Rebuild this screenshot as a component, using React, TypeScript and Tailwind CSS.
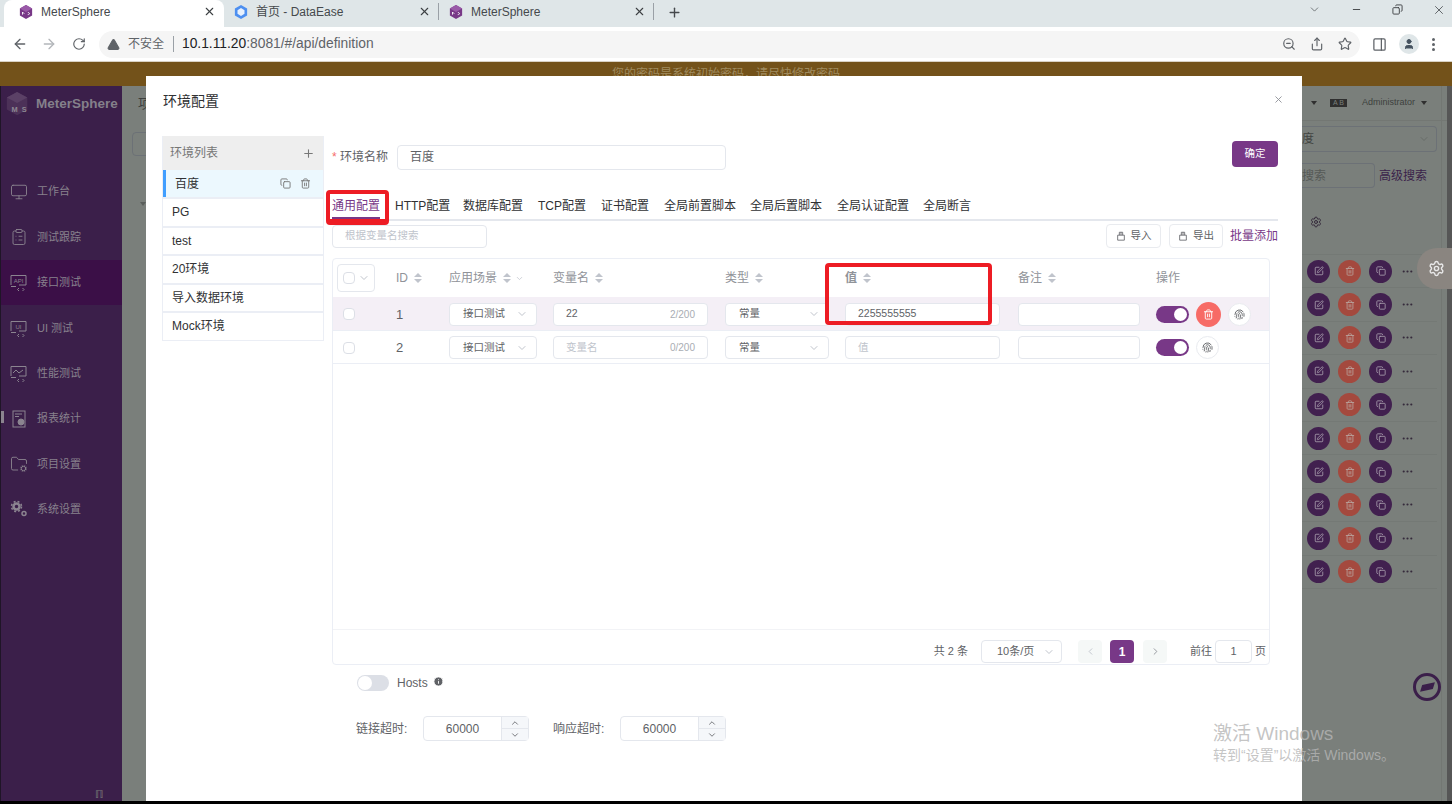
import {
  ArrowLeft,
  ArrowRight,
  ChevronDown,
  ChevronLeft,
  ChevronRight,
  ChevronUp,
  ClipboardList,
  Copy,
  Ellipsis,
  Fingerprint,
  FolderCog,
  Info,
  Minus,
  Monitor,
  PanelRight,
  Plus,
  RotateCw,
  Settings,
  Share,
  SquarePen,
  Star,
  Trash2,
  TriangleAlert,
  User,
  X,
  ZoomOut,
} from 'lucide-react';

const tabs = [
  { label: '通用配置', w: 'w-[63px]' },
  { label: 'HTTP配置', w: 'w-[68px]' },
  { label: '数据库配置', w: 'w-[75px]' },
  { label: 'TCP配置', w: 'w-[63px]' },
  { label: '证书配置', w: 'w-[63px]' },
  { label: '全局前置脚本', w: 'w-[86px]' },
  { label: '全局后置脚本', w: 'w-[87px]' },
  { label: '全局认证配置', w: 'w-[86px]' },
  { label: '全局断言', w: 'w-[60px]' },
];
const envs = ['PG', 'test', '20环境', '导入数据环境', 'Mock环境'];

function Favicon() {
  return (
    <svg viewBox="0 0 16 16" className="w-[14px] h-[14px] shrink-0">
      <polygon points="8,0 15,4 15,12 8,16 1,12 1,4" fill="#783887" />
      <polygon points="8,0 15,4 8,8 1,4" fill="#9a5aa8" />
      <path d="M4 11V8l2 2M10 11c1 0 2-.3 2-1.2S10 8.600 10 8" stroke="#fff" strokeWidth="1" fill="none" />
    </svg>
  );
}

function ChromeTab({ title, active, sep, icon }: { title: string; active?: boolean; sep?: boolean; icon: React.ReactNode }) {
  return (
    <div className={`h-[27px] flex items-center pb-[4px] pr-[8px] ${active ? 'w-[220px] pl-[15px] bg-white rounded-t-lg' : 'w-[215px] pl-[10px]'} ${sep ? 'relative' : ''}`}>
      {icon}
      <span className="ml-[8px] text-[12px] text-[#45494c] flex-1">{title}</span>
      <X size={13} className="text-[#3c4043]" />
      {sep && <span className="absolute right-0 top-[3px] h-[17px] w-px bg-[#9aa0a6]" />}
    </div>
  );
}

function SideIcon({ label, kind }: { label?: string; kind?: 'chart' }) {
  return (
    <svg viewBox="0 0 18 18" className="w-[18px] h-[18px] text-[#8b8490]" fill="none" stroke="currentColor" strokeWidth="1">
      <path d="M1 12V2.500h15V12H9M1 13.500h5" />
      {label && (
        <text x="8.500" y="10" textAnchor="middle" fontSize="6" fill="currentColor" stroke="none">
          {label}
        </text>
      )}
      {kind === 'chart' && <path d="M3 9l3-3 3 3 4-3" />}
      <path d="M9 15l-1.500 1.500L9 18M12.500 15l1.500 1.500-1.500 1.500" />
    </svg>
  );
}

function SideItem({ icon, label, active }: { icon: React.ReactNode; label: string; active?: boolean }) {
  return (
    <div className={`h-[45.400px] flex items-center pl-[9px] ${active ? 'bg-[#3b0f47]' : ''}`}>
      <span className="w-[27px] flex items-center">{icon}</span>
      <span className="text-[11px] text-[#88818d]">{label}</span>
    </div>
  );
}

function Sidebar() {
  return (
    <aside className="w-[122px] shrink-0 bg-[#3b1f4a] border-l border-[#1f1527] flex flex-col relative">
      <div className="h-[36px] flex items-center pl-[4px]">
        <svg viewBox="0 0 28 28" className="w-[26px] h-[26px] shrink-0">
          <polygon points="13,1 24,7 24,20 13,26 2,20 2,7" fill="#4c3158" />
          <polygon points="13,1 24,7 13,13 2,7" fill="#5b4166" />
          <text x="7" y="23" fontSize="8" fontWeight="700" fill="#8d8792">M</text>
          <text x="18" y="23" fontSize="8" fontWeight="700" fill="#8d8792">S</text>
        </svg>
        <span className="ml-[5px] text-[13.500px] font-bold text-[#84808a] whitespace-nowrap">MeterSphere</span>
      </div>
      <div className="h-[47px]" />
      <div className="flex flex-col">
        <SideItem label="工作台" icon={<Monitor size={18} strokeWidth={1.2} className="text-[#8b8490]" />} />
        <SideItem label="测试跟踪" icon={<ClipboardList size={18} strokeWidth={1.2} className="text-[#8b8490]" />} />
        <SideItem active label="接口测试" icon={<SideIcon label="API" />} />
        <SideItem label="UI 测试" icon={<SideIcon label="UI" />} />
        <SideItem label="性能测试" icon={<SideIcon kind="chart" />} />
        <SideItem
          label="报表统计"
          icon={
            <svg viewBox="0 0 18 18" className="w-[18px] h-[18px] text-[#8b8490]" fill="none" stroke="currentColor">
              <rect x="3" y="1" width="12" height="16" />
              <path d="M5 4h7M5 6.500h4" />
              <circle cx="11" cy="12" r="3" fill="currentColor" />
            </svg>
          }
        />
        <SideItem label="项目设置" icon={<FolderCog size={18} strokeWidth={1.2} className="text-[#8b8490]" />} />
        <SideItem
          label="系统设置"
          icon={
            <svg viewBox="0 0 18 18" className="w-[18px] h-[18px] text-[#8b8490]" fill="none" stroke="currentColor">
              <circle cx="6.500" cy="6.500" r="3" strokeWidth="2.500" />
              <circle cx="6.500" cy="6.500" r="5" strokeWidth="1.500" strokeDasharray="2 2" />
              <circle cx="14" cy="13.500" r="2" strokeWidth="1.500" />
            </svg>
          }
        />
      </div>
      <span className="absolute left-0 top-[325px] w-[3px] h-[12px] bg-[#8b8490]" />
      <span className="absolute left-[94px] bottom-[1px] text-[#777] text-[11px] leading-none">ℿ</span>
    </aside>
  );
}

function BackRow() {
  return (
    <div className="h-[33.400px] flex items-center pl-[5px] border-b border-[#747975] shrink-0">
      <span className="w-[23px] h-[23px] rounded-full bg-[#41204f] flex items-center justify-center">
        <SquarePen size={10} className="text-[#a99fae]" />
      </span>
      <span className="ml-[8px] w-[23px] h-[23px] rounded-full bg-[#a4493e] flex items-center justify-center">
        <Trash2 size={10} className="text-[#b9a29c]" />
      </span>
      <span className="ml-[8px] w-[23px] h-[23px] rounded-full bg-[#41204f] flex items-center justify-center">
        <Copy size={10} className="text-[#a99fae]" />
      </span>
      <Ellipsis size={13} className="ml-[9px] text-[#352a3b]" />
    </div>
  );
}

function BehindRight() {
  return (
    <div className="w-[150px] shrink-0 flex flex-col relative">
      <div className="h-[35px] flex items-center border-b border-[#737773] pl-[9px] text-[#2f2f2f]">
        <span className="w-0 h-0 border-x-[3px] border-x-transparent border-t-[4px] border-t-[#2f2f2f]" />
        <span className="ml-[13px] w-[17px] bg-[#2f2f2f] text-[#7a7f7b] text-[7px] leading-[8px] text-center">A B</span>
        <span className="ml-[15px] text-[9px] text-[#3d3f3d] whitespace-nowrap">Administrator</span>
        <span className="ml-[6px] w-0 h-0 border-x-[3px] border-x-transparent border-t-[4px] border-t-[#2f2f2f]" />
      </div>
      <div className="mt-[5px] w-[135px] h-[26px] border border-[#6c7176] rounded-r flex items-center border-l-0 text-[12px] text-[#424542]">
        度
        <ChevronDown size={12} className="ml-auto mr-[6px] text-[#686d69]" />
      </div>
      <div className="mt-[11px] flex items-center">
        <span className="w-[73px] h-[25px] border border-[#6c7176] border-l-0 rounded-r flex items-center text-[12px] text-[#565a57]">搜索</span>
        <span className="ml-[4px] text-[12px] text-[#3b1f4a] whitespace-nowrap">高级搜索</span>
      </div>
      <div className="mt-[15px] pl-[8px] h-[52px] flex items-start border-b border-[#747975] w-[135px]">
        <Settings size={12} className="mt-[13px] text-[#352a3b]" />
      </div>
      <div className="flex flex-col w-[135px]">
        {Array.from({ length: 10 }).map((_, i) => (
          <BackRow key={i} />
        ))}
      </div>
      <div className="absolute right-0 top-0 bottom-0 w-[5px] bg-[#565656]" />
      <div className="absolute right-[10px] top-0 bottom-0 w-px bg-[#737773]" />
      <div className="absolute right-0 top-[162px] w-[35px] h-[41px] rounded-l-[20px] bg-[#8a8580] flex items-center pl-[11px]">
        <Settings size={17} className="text-[#e8e8e8]" />
      </div>
      <div className="absolute left-[111px] top-[587px] w-[28px] h-[28px] rounded-full border-[3px] border-[#3b1f4a] flex items-center justify-center">
        <span className="w-[13px] h-[6px] bg-[#3b1f4a] -skew-x-[30deg] -rotate-12" />
      </div>
    </div>
  );
}

function SortCaret() {
  return (
    <span className="inline-flex flex-col gap-[2px] ml-[6px] align-middle">
      <span className="w-0 h-0 border-x-[4px] border-x-transparent border-b-[4px] border-b-[#c0c4cc]" />
      <span className="w-0 h-0 border-x-[4px] border-x-transparent border-t-[4px] border-t-[#c0c4cc]" />
    </span>
  );
}

function HeadCell({ label, w, big }: { label: string; w: string; big?: boolean }) {
  return (
    <div className={`${w} shrink-0 text-[#909399] ${big ? 'text-[12px] font-bold' : 'text-[12px]'} flex items-center`}>
      {label}
      <SortCaret />
    </div>
  );
}

function SelectBox({ value, w }: { value: string; w: string }) {
  return (
    <div className={`${w} h-[23px] bg-white border border-[#e4e7ed] rounded flex items-center pl-[13px] pr-[8px] text-[10.500px] text-[#606266]`}>
      <span className="flex-1">{value}</span>
      <ChevronDown size={12} className="text-[#c0c4cc]" />
    </div>
  );
}

function TextBox({ value, hint, count, w }: { value?: string; hint?: string; count?: string; w: string }) {
  return (
    <div className={`${w} h-[23px] bg-white border border-[#e4e7ed] rounded flex items-center px-[12px] text-[10.500px]`}>
      <span className={`flex-1 ${value ? 'text-[#606266]' : 'text-[#c0c4cc]'}`}>{value ?? hint}</span>
      {count && <span className="text-[#a9adb3] text-[10px]">{count}</span>}
    </div>
  );
}

function Toggle() {
  return (
    <span className="w-[33px] h-[17px] rounded-full bg-[#783887] flex items-center justify-end pr-[2px] shrink-0">
      <span className="w-[13px] h-[13px] rounded-full bg-white" />
    </span>
  );
}

function RoundFinger() {
  return (
    <span className="w-[23px] h-[23px] rounded-full bg-white border border-[#e9ebef] flex items-center justify-center shrink-0">
      <Fingerprint size={11} className="text-[#606266]" />
    </span>
  );
}

function EnvRow({ id, name, nameHint, count, value, hint, hover }: { id: string; name?: string; nameHint?: string; count: string; value?: string; hint?: string; hover?: boolean }) {
  return (
    <div className={`h-[33.500px] pt-[2px] flex items-center border-b border-[#ebeef5] shrink-0 ${hover ? 'bg-[#f4eff6]' : 'bg-white'}`}>
      <div className="w-[63px] shrink-0 pl-[10px]">
        <span className="block w-[12px] h-[12px] border border-[#dcdfe6] bg-white rounded-sm" />
      </div>
      <div className="w-[53px] shrink-0 text-[13px] text-[#606266]">{id}</div>
      <div className="w-[104px] shrink-0"><SelectBox value="接口测试" w="w-[88px]" /></div>
      <div className="w-[172px] shrink-0"><TextBox value={name} hint={nameHint} count={count} w="w-[155px]" /></div>
      <div className="w-[120px] shrink-0"><SelectBox value="常量" w="w-[104px]" /></div>
      <div className="w-[173px] shrink-0"><TextBox value={value} hint={hint} w="w-[155px]" /></div>
      <div className="w-[138px] shrink-0"><TextBox w="w-[122px]" /></div>
      <div className="flex items-center gap-[7px]">
        <Toggle />
        {hover && (
          <span className="w-[25px] h-[25px] rounded-full bg-[#f76b66] flex items-center justify-center shrink-0">
            <Trash2 size={11} className="text-white" />
          </span>
        )}
        <RoundFinger />
      </div>
    </div>
  );
}

function SmallBtn({ label, w }: { label: string; w: string }) {
  return (
    <span className={`${w} h-[24px] border border-[#e9ebef] rounded flex items-center justify-center gap-[5px] text-[10.500px] text-[#606266]`}>
      <svg viewBox="0 0 12 12" className="w-[10px] h-[10px]" fill="none" stroke="currentColor">
        <path d="M2 5h8v6H2zM4 5V1.500h4V5M6 1.500V5" />
      </svg>
      {label}
    </span>
  );
}

function NumberInput() {
  return (
    <div className="w-[106px] h-[25px] border border-[#e4e7ed] rounded flex">
      <span className="flex-1 flex items-center justify-center text-[12px] text-[#606266]">60000</span>
      <span className="w-[27px] border-l border-[#e4e7ed] bg-[#f5f7fa] flex flex-col">
        <span className="flex-1 flex items-center justify-center border-b border-[#e4e7ed]"><ChevronUp size={10} className="text-[#606266]" /></span>
        <span className="flex-1 flex items-center justify-center"><ChevronDown size={10} className="text-[#606266]" /></span>
      </span>
    </div>
  );
}

function EnvDialog() {
  return (
    <div className="absolute left-[146px] top-[76px] w-[1156px] h-[725px] bg-white">
      <div className="h-[60px] pl-[17px] pt-[16px] text-[14px] leading-[18px] text-[#303133]">环境配置</div>
      <X size={11} className="absolute right-[18px] top-[18px] text-[#909399]" />

      <div className="flex pl-[16px]">
        <div className="w-[162px] shrink-0 border-x border-b border-[#ebeef5] self-start">
          <div className="h-[34px] bg-[#eeeeee] flex items-center justify-between pl-[7px] pr-[8px] text-[12px] text-[#767676]">
            环境列表
            <Plus size={13} className="text-[#777]" />
          </div>
          <div className="h-[27px] bg-[#ecf8fe] border-l-[3px] border-[#409eff] flex items-center pl-[9px] pr-[12px] text-[12px] text-[#303133] border-b-0">
            <span className="flex-1">百度</span>
            <Copy size={11} className="text-[#777]" />
            <Trash2 size={11} className="ml-[9px] text-[#777]" />
          </div>
          {envs.map((e) => (
            <div key={e} className="h-[28.500px] flex items-center pl-[9px] text-[12px] text-[#303133] border-t-2 border-[#ebeef5]">
              {e}
            </div>
          ))}
        </div>

        <div className="ml-[8px] w-[946px] flex flex-col">
          <div className="mt-[5px] h-[26px] flex items-center">
            <span className="w-[65px] mt-[6px] shrink-0 text-[12px] text-[#606266]">
              <span className="text-[#f56c6c]">* </span>环境名称
            </span>
            <div className="w-[329px] mt-[6px] h-[25px] border border-[#e4e7ed] rounded flex items-center pl-[12px] text-[12px] text-[#606266]">百度</div>
            <button className="ml-auto w-[46px] h-[26px] bg-[#783887] text-white text-[10.500px] rounded-sm">确定</button>
          </div>

          <div className="mt-[25px] h-[29px] border-b-2 border-[#e4e7ed] flex text-[12px] text-[#303133]">
            {tabs.map((t, i) => (
              <div key={t.label} className={`${t.w} shrink-0 h-[29px] pt-[5px] whitespace-nowrap`}>
                <span className={`inline-block h-[22px] ${i === 0 ? 'text-[#783887] border-b-2 border-[#783887]' : ''}`}>{t.label}</span>
              </div>
            ))}
          </div>

          <div className="mt-[3px] h-[24px] flex items-center">
            <div className="w-[155px] h-[23px] border border-[#e4e7ed] rounded flex items-center pl-[12px] text-[10.500px] text-[#c0c4cc]">根据变量名搜索</div>
            <div className="ml-auto flex items-center">
              <SmallBtn label="导入" w="w-[55px]" />
              <span className="w-[8px]" />
              <SmallBtn label="导出" w="w-[54px]" />
              <span className="ml-[7px] w-[48px] text-[12px] text-[#783887] whitespace-nowrap">批量添加</span>
            </div>
          </div>

          <div className="mt-[10px] w-[938px] h-[407px] border border-[#ebeef5] rounded flex flex-col">
            <div className="h-[38px] flex items-center shrink-0">
              <div className="w-[63px] shrink-0 pl-[4px]">
                <div className="w-[38px] h-[28px] border border-[#e4e7ed] rounded flex items-center justify-center gap-[3px]">
                  <span className="w-[12px] h-[12px] border border-[#dcdfe6] rounded-sm" />
                  <ChevronDown size={12} className="text-[#c0c4cc]" />
                </div>
              </div>
              <HeadCell label="ID" w="w-[53px]" />
              <div className="w-[104px] shrink-0 flex items-center text-[12px] text-[#909399]">
                应用场景
                <SortCaret />
                <ChevronDown size={9} className="ml-[4px] text-[#c0c4cc]" />
              </div>
              <HeadCell label="变量名" w="w-[172px]" />
              <HeadCell label="类型" w="w-[120px]" />
              <HeadCell label="值" w="w-[173px]" big />
              <HeadCell label="备注" w="w-[138px]" />
              <div className="text-[12px] text-[#909399]">操作</div>
            </div>
            <EnvRow hover id="1" name="22" count="2/200" value="2255555555" />
            <EnvRow id="2" nameHint="变量名" count="0/200" hint="值" />
            <div className="flex-1" />
            <div className="h-[35px] pt-[9px] border-t border-[#f2f3f6] flex items-center justify-end pr-[3px] text-[11px] text-[#606266] shrink-0">
              <span>共 2 条</span>
              <div className="ml-[13px] w-[81px] h-[23px] border border-[#e4e7ed] rounded flex items-center pl-[15px] pr-[6px] text-[11px]">
                <span className="flex-1">10条/页</span>
                <ChevronDown size={12} className="text-[#c0c4cc]" />
              </div>
              <span className="ml-[16px] w-[24px] h-[23px] bg-[#f5f8f7] rounded-sm flex items-center justify-center"><ChevronLeft size={11} className="text-[#c0c4cc]" /></span>
              <span className="ml-[8px] w-[24px] h-[23px] bg-[#783887] rounded-sm flex items-center justify-center text-white font-bold text-[12px]">1</span>
              <span className="ml-[9px] w-[24px] h-[23px] bg-[#f5f8f7] rounded-sm flex items-center justify-center"><ChevronRight size={11} className="text-[#909399]" /></span>
              <span className="ml-[23px]">前往</span>
              <span className="ml-[3px] w-[37px] h-[23px] border border-[#e4e7ed] rounded flex items-center justify-center">1</span>
              <span className="ml-[3px]">页</span>
            </div>
          </div>

          <div className="mt-[10px] h-[16px] pl-[25px] flex items-center">
            <span className="w-[32px] h-[16px] rounded-full bg-[#dcdfe6] flex items-center pl-[1px]">
              <span className="w-[14px] h-[14px] rounded-full bg-white" />
            </span>
            <span className="ml-[8px] text-[12px] text-[#606266]">Hosts</span>
            <Info size={11} className="ml-[5px] -mt-[3px] text-white fill-[#606266]" />
          </div>

          <div className="mt-[25px] h-[25px] pl-[24px] flex items-center text-[12px] text-[#606266]">
            <span className="w-[67px] shrink-0">链接超时:</span>
            <NumberInput />
            <span className="ml-[24px] w-[67px] shrink-0">响应超时:</span>
            <NumberInput />
          </div>
        </div>
      </div>

      <div className="absolute left-[180px] top-[114px] w-[63px] h-[35px] border-4 border-b-[6px] border-[#ed1c24] rounded-sm" />
      <div className="absolute left-[679px] top-[187px] w-[167px] h-[62px] border-4 border-[#ed1c24] rounded-sm" />
    </div>
  );
}

export default function App() {
  return (
    <div className="relative w-[1452px] h-[804px] overflow-hidden flex flex-col bg-white font-['Liberation_Sans','Noto_Sans_CJK_SC',sans-serif]">
      <div className="h-[27px] bg-[#dfe6e8] flex items-center pl-[4px] shrink-0">
        <ChromeTab active title="MeterSphere" icon={<Favicon />} />
        <ChromeTab
          sep
          title="首页 - DataEase"
          icon={
            <svg viewBox="0 0 16 16" className="w-[14px] h-[14px] shrink-0">
              <polygon points="8,0 15,4 15,12 8,16 1,12 1,4" fill="#4d8ff0" />
              <polygon points="8,3.500 12,6 12,10 8,12.500 4,10 4,6" fill="#e8f1fd" />
            </svg>
          }
        />
        <ChromeTab sep title="MeterSphere" icon={<Favicon />} />
        <Plus size={15} strokeWidth={2.2} className="ml-[13px] mb-[3px] text-[#45494c]" />
        <div className="ml-auto mb-[8px] flex items-center text-[#3c4043]">
          <ChevronDown size={13} strokeWidth={1.2} />
          <Minus size={11} className="ml-[30px]" />
          <Copy size={11} className="ml-[30px] -scale-x-100" />
          <X size={14} strokeWidth={1.3} className="ml-[29px] mr-[6px]" />
        </div>
      </div>

      <div className="h-[35px] bg-white flex items-center pl-[12px] pr-[6px] border-b border-[#d9d2c4] shrink-0">
        <ArrowLeft size={16} className="text-[#5f6368]" />
        <ArrowRight size={16} className="ml-[13px] text-[#b3b6ba]" />
        <RotateCw size={14} className="ml-[15px] text-[#5f6368]" />
        <div className="ml-[13px] w-[1261px] h-[27px] rounded-full bg-[#f5f5f5] flex items-center pl-[8px] pr-[5px]">
          <TriangleAlert size={13} className="text-[#5f6368] fill-[#5f6368] stroke-[#5f6368]" />
          <span className="ml-[8px] text-[12px] text-[#5f6368]">不安全</span>
          <span className="ml-[9px] h-[16px] w-px bg-[#9aa0a6]" />
          <span className="ml-[8px] text-[13.800px] text-[#202124]">10.1.11.20<span className="text-[#5f6368]">:8081/#/api/definition</span></span>
          <div className="ml-auto flex items-center gap-[14px] text-[#5f6368]">
            <ZoomOut size={14} />
            <Share size={14} />
            <Star size={14} className="mr-[3px]" />
          </div>
        </div>
        <PanelRight size={15} className="ml-[12px] text-[#5f6368]" />
        <span className="ml-[12px] w-[20px] h-[20px] rounded-full bg-[#dfe6e8] flex items-center justify-center">
          <User size={12} className="text-[#45525f] fill-[#45525f]" />
        </span>
        <span className="ml-[13px] flex flex-col gap-[2px]">
          <span className="w-[3px] h-[3px] rounded-full bg-[#5f6368]" />
          <span className="w-[3px] h-[3px] rounded-full bg-[#5f6368]" />
          <span className="w-[3px] h-[3px] rounded-full bg-[#5f6368]" />
        </span>
      </div>

      <div className="h-[24px] bg-[#73521a] flex items-center justify-center text-[12px] text-[#a08b5f] shrink-0">
        您的密码是系统初始密码，请尽快修改密码
      </div>

      <div className="flex-1 flex bg-[#7a7f7b] min-h-0 overflow-hidden">
        <Sidebar />
        <div className="flex-1 pl-[10px]">
          <div className="h-[35px] pl-[6px] flex items-center text-[13px] text-[#3d3f3d] overflow-hidden">项</div>
          <div className="mt-[11px] h-[24px] border border-[#6c7176] rounded-l" />
          <div className="mt-[46px] ml-[8px] w-0 h-0 border-x-[3px] border-x-transparent border-t-[4px] border-t-[#5a5e5b]" />
        </div>
        <BehindRight />
      </div>

      <div className="h-[3px] bg-black shrink-0" />

      <EnvDialog />

      <div className="absolute left-[1213px] top-[722px] pointer-events-none text-[#b5b5b5]/80">
        <div className="text-[19px] leading-[23px]">激活 Windows</div>
        <div className="text-[14px] leading-[20px]">转到“设置”以激活 Windows。</div>
      </div>
    </div>
  );
}
